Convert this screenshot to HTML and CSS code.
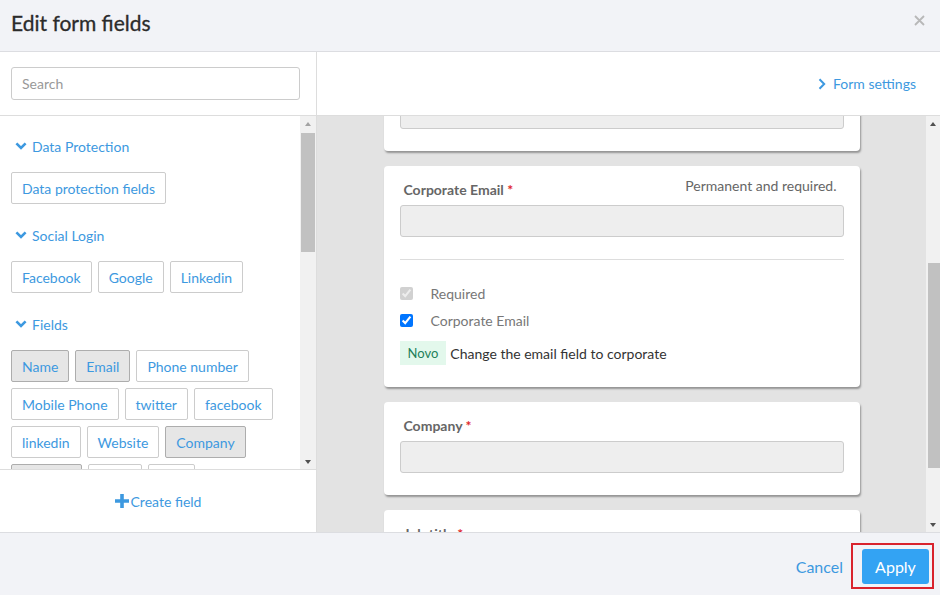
FILE: index.html
```html
<!DOCTYPE html>
<html lang="en">
<head>
    <meta charset="UTF-8">
    <meta name="viewport" content="width=device-width, initial-scale=1.0">
    <title>Edit form fields</title>
    <link rel="stylesheet" href="styles.css">
</head>
<body>
    <div class="modal">
        <header class="modal-header">
            <h1 class="modal-title">Edit form fields</h1>
            <button class="close-btn" aria-label="Close">
                <svg width="11" height="11" viewBox="0 0 11 11"><path d="M1 1l9 9M10 1l-9 9" stroke="#b8b8b8" stroke-width="1.8" fill="none"/></svg>
            </button>
        </header>

        <div class="modal-body">
            <aside class="sidebar">
                <div class="search-box">
                    <input type="text" placeholder="Search">
                </div>
                <div class="list-wrap">
                    <div class="field-list">
                        <div class="group">
                            <div class="group-title">
                                <svg width="12" height="8" viewBox="0 0 12 8"><path d="M1.4 1.4 6 6l4.6-4.6" fill="none" stroke="currentColor" stroke-width="2.6"/></svg>
                                Data Protection
                            </div>
                            <div class="chips">
                                <button class="chip">Data protection fields</button>
                            </div>
                        </div>
                        <div class="group">
                            <div class="group-title">
                                <svg width="12" height="8" viewBox="0 0 12 8"><path d="M1.4 1.4 6 6l4.6-4.6" fill="none" stroke="currentColor" stroke-width="2.6"/></svg>
                                Social Login
                            </div>
                            <div class="chips">
                                <button class="chip">Facebook</button>
                                <button class="chip">Google</button>
                                <button class="chip">Linkedin</button>
                            </div>
                        </div>
                        <div class="group">
                            <div class="group-title">
                                <svg width="12" height="8" viewBox="0 0 12 8"><path d="M1.4 1.4 6 6l4.6-4.6" fill="none" stroke="currentColor" stroke-width="2.6"/></svg>
                                Fields
                            </div>
                            <div class="chips">
                                <button class="chip on">Name</button>
                                <button class="chip on">Email</button>
                                <button class="chip">Phone number</button>
                                <button class="chip">Mobile Phone</button>
                                <button class="chip">twitter</button>
                                <button class="chip">facebook</button>
                                <button class="chip">linkedin</button>
                                <button class="chip">Website</button>
                                <button class="chip on">Company</button>
                                <button class="chip on">Job title</button>
                                <button class="chip">State</button>
                                <button class="chip">City</button>
                                <button class="chip">Area of interest</button>
                                <button class="chip">Country</button>
                                <button class="chip">Zip code</button>
                                <button class="chip">Address</button>
                                <button class="chip">Gender</button>
                                <button class="chip">Birthday</button>
                            </div>
                        </div>
                        <div class="group">
                            <div class="group-title">
                                <svg width="12" height="8" viewBox="0 0 12 8"><path d="M1.4 1.4 6 6l4.6-4.6" fill="none" stroke="currentColor" stroke-width="2.6"/></svg>
                                Custom Fields
                            </div>
                            <div class="chips">
                                <button class="chip">Segment</button>
                                <button class="chip">Employees</button>
                                <button class="chip">Revenue</button>
                                <button class="chip">Message</button>
                            </div>
                        </div>
                        <div class="group">
                            <div class="group-title">
                                <svg width="12" height="8" viewBox="0 0 12 8"><path d="M1.4 1.4 6 6l4.6-4.6" fill="none" stroke="currentColor" stroke-width="2.6"/></svg>
                                Hidden Fields
                            </div>
                            <div class="chips">
                                <button class="chip">utm_source</button>
                                <button class="chip">utm_medium</button>
                                <button class="chip">utm_campaign</button>
                            </div>
                        </div>
                    </div>
                    <div class="scrollbar">
                        <div class="sb-btn up faded"></div>
                        <div class="sb-track"><div class="sb-thumb" style="margin-top: 2px; height: 119px;"></div></div>
                        <div class="sb-btn down"></div>
                    </div>
                </div>
                <div class="create-field">
                    <svg width="14" height="14" viewBox="0 0 14 14"><path d="M7 0v14M0 7h14" stroke="currentColor" stroke-width="3.6"/></svg>
                    Create field
                </div>
            </aside>

            <section class="preview">
                <div class="preview-top">
                    <a class="settings-link" href="#">
                        <svg width="8" height="12" viewBox="0 0 8 12"><path d="M1.5 1.2 6.2 6l-4.7 4.8" fill="none" stroke="currentColor" stroke-width="2"/></svg>
                        Form settings
                    </a>
                </div>
                <div class="preview-wrap">
                    <div class="preview-scroll" id="preview">
                        <div class="card">
                            <div class="card-label">Title</div>
                            <div class="card-input tall"></div>
                        </div>
                        <div class="card">
                            <div class="card-label">Name <span class="req">*</span></div>
                            <div class="card-input"></div>
                        </div>
                        <div class="card">
                            <div class="label-row">
                                <div class="card-label">Corporate Email <span class="req">*</span></div>
                                <div class="perm">Permanent and required.</div>
                            </div>
                            <div class="card-input"></div>
                            <div class="card-rule"></div>
                            <label class="check-row first">
                                <input type="checkbox" checked disabled>
                                <span>Required</span>
                            </label>
                            <label class="check-row">
                                <input type="checkbox" checked>
                                <span>Corporate Email</span>
                            </label>
                            <div class="news-row">
                                <span class="badge">Novo</span>
                                <span>Change the email field to corporate</span>
                            </div>
                        </div>
                        <div class="card">
                            <div class="card-label">Company <span class="req">*</span></div>
                            <div class="card-input"></div>
                        </div>
                        <div class="card">
                            <div class="card-label">Job title <span class="req">*</span></div>
                            <div class="card-input"></div>
                        </div>
                    </div>
                    <div class="scrollbar narrow">
                        <div class="sb-btn up"></div>
                        <div class="sb-track"><div class="sb-thumb" style="margin-top: 132px; height: 205px;"></div></div>
                        <div class="sb-btn down"></div>
                    </div>
                </div>
            </section>
        </div>

        <footer class="modal-footer">
            <a class="cancel" href="#">Cancel</a>
            <span class="apply-mark"><button class="apply">Apply</button></span>
        </footer>
    </div>

    <script>
        document.getElementById("preview").scrollTop = 268;
    </script>
</body>
</html>
```

FILE: styles.css
```css
body {
    margin: 0;
    font-family: Lato, "Liberation Sans", sans-serif;
    color: #333;
    background-color: #fff;
}

.modal {
    display: flex;
    flex-direction: column;
    height: 595px;
}

/* header */

.modal-header {
    display: flex;
    justify-content: space-between;
    align-items: center;
    height: 52px;
    box-sizing: border-box;
    padding: 0 15px 6px 11px;
    background-color: #f2f3f7;
    border-bottom: 1px solid #dcdde1;
}

.modal-title {
    margin: 0;
    font-size: 21px;
    font-weight: 400;
    color: #2b2b2b;
    -webkit-text-stroke: 0.3px #2b2b2b;
}

.close-btn {
    display: flex;
    padding: 0;
    border: none;
    background: none;
    margin-top: -4px;
}

/* body */

.modal-body {
    flex: 1;
    display: flex;
    min-height: 0;
}

.sidebar {
    width: 317px;
    box-sizing: border-box;
    border-right: 1px solid #dddddd;
    display: flex;
    flex-direction: column;
}

.search-box {
    height: 64px;
    box-sizing: border-box;
    padding: 15px 16px 0 11px;
    border-bottom: 1px solid #dddddd;
}

.search-box input {
    width: 100%;
    height: 33px;
    box-sizing: border-box;
    padding: 0 10px;
    border: 1px solid #cccccc;
    border-radius: 3px;
    font-family: Lato, "Liberation Sans", sans-serif;
    font-size: 14px;
    color: #333;
}

.search-box input::placeholder {
    color: #999;
}

.list-wrap {
    flex: 1;
    min-height: 0;
    display: flex;
    border-bottom: 1px solid #dddddd;
}

.field-list {
    flex: 1;
    min-width: 0;
    overflow: hidden;
    padding-top: 20px;
}

.group {
    margin-bottom: 21px;
}

.group-title {
    display: flex;
    align-items: center;
    height: 20px;
    padding-left: 15px;
    margin-bottom: 16px;
    font-size: 14px;
    color: #3d99e0;
}

.group-title svg {
    margin-right: 5px;
}

.chips {
    display: flex;
    flex-wrap: wrap;
    gap: 6px;
    padding-left: 11px;
}

.chip {
    height: 32px;
    padding: 0 10px;
    border: 1px solid #cccccc;
    border-radius: 2px;
    background-color: #fff;
    font-family: Lato, "Liberation Sans", sans-serif;
    font-size: 14px;
    color: #3d99e0;
}

.chip.on {
    background-color: #e6e6e6;
    border-color: #adadad;
}

.create-field {
    height: 62px;
    display: flex;
    align-items: center;
    justify-content: center;
    font-size: 14px;
    color: #3d99e0;
}

.create-field svg {
    margin-right: 2px;
}

/* fake scrollbars */

.scrollbar {
    width: 16px;
    flex-shrink: 0;
    display: flex;
    flex-direction: column;
    background-color: #f1f1f1;
}

.scrollbar.narrow {
    width: 14px;
}

.sb-btn {
    height: 15px;
    display: flex;
    align-items: center;
    justify-content: center;
}

.sb-btn::after {
    content: "";
    border-left: 3.5px solid transparent;
    border-right: 3.5px solid transparent;
}

.sb-btn.up::after {
    border-bottom: 4px solid #505050;
}

.sb-btn.down::after {
    border-top: 4px solid #505050;
}

.sb-btn.up.faded::after {
    border-bottom-color: #a3a3a3;
}

.sb-track {
    flex: 1;
}

.sb-thumb {
    margin-left: 1px;
    margin-right: 1px;
    background-color: #c1c1c1;
}

.narrow .sb-thumb {
    margin-left: 2px;
    margin-right: 0;
}

/* preview */

.preview {
    flex: 1;
    min-width: 0;
    display: flex;
    flex-direction: column;
}

.preview-top {
    height: 64px;
    box-sizing: border-box;
    border-bottom: 1px solid #dddddd;
    display: flex;
    justify-content: flex-end;
    align-items: center;
    padding-right: 24px;
}

.settings-link {
    display: flex;
    align-items: center;
    font-size: 14px;
    color: #3d99e0;
    text-decoration: none;
}

.settings-link svg {
    margin-right: 7px;
}

.preview-wrap {
    flex: 1;
    min-height: 0;
    display: flex;
    background-color: #e3e3e3;
}

.preview-scroll {
    flex: 1;
    min-width: 0;
    overflow: hidden;
    padding: 15px 0 31px;
}

.card {
    width: 476px;
    box-sizing: border-box;
    margin: 0 auto 15px;
    padding: 14px 16px 22px;
    background-color: #fff;
    border-radius: 4px;
    box-shadow: 1px 2px 2px rgba(0, 0, 0, 0.35);
}

.card:last-child {
    margin-bottom: 0;
}

.label-row {
    display: flex;
    justify-content: space-between;
}

.card-label {
    height: 20px;
    line-height: 20px;
    padding-left: 4px;
    font-size: 14px;
    font-weight: bold;
    color: #666;
}

.req {
    color: #e0262b;
}

.perm {
    margin: -4px 7px 0 0;
    line-height: 20px;
    font-size: 14px;
    color: #666;
}

.card-input {
    height: 32px;
    box-sizing: border-box;
    margin-top: 5px;
    background-color: #eeeeee;
    border: 1px solid #cccccc;
    border-radius: 3px;
}

.card-input.tall {
    height: 119px;
}

.card-rule {
    margin-top: 22px;
    border-top: 1px solid #dddddd;
}

.check-row {
    display: flex;
    align-items: center;
    height: 27px;
    font-size: 14px;
    color: #777;
}

.check-row.first {
    margin-top: 20px;
}

.check-row input {
    width: 13px;
    height: 13px;
    margin: 0 18px 0 0;
}

.news-row {
    display: flex;
    align-items: center;
    margin-top: 7px;
    font-size: 14px;
    color: #333;
}

.badge {
    height: 24px;
    line-height: 24px;
    padding: 0 8px;
    margin-right: 4px;
    background-color: #e3f8ec;
    color: #23805a;
    font-size: 13px;
}

/* footer */

.modal-footer {
    height: 63px;
    box-sizing: border-box;
    border-top: 1px solid #dcdde1;
    background-color: #f2f3f7;
    display: flex;
    justify-content: flex-end;
    align-items: center;
    gap: 8px;
    padding: 4px 6px 0 0;
}

.cancel {
    font-size: 16px;
    color: #3d99e0;
    text-decoration: none;
}

.apply-mark {
    display: flex;
    padding: 4px 3px 3px 9px;
    border: 2px solid #d9232d;
}

.apply {
    width: 67px;
    height: 35px;
    border: none;
    border-radius: 3px;
    background-color: #33a3f3;
    color: #fff;
    font-family: Lato, "Liberation Sans", sans-serif;
    font-size: 16px;
}
```
